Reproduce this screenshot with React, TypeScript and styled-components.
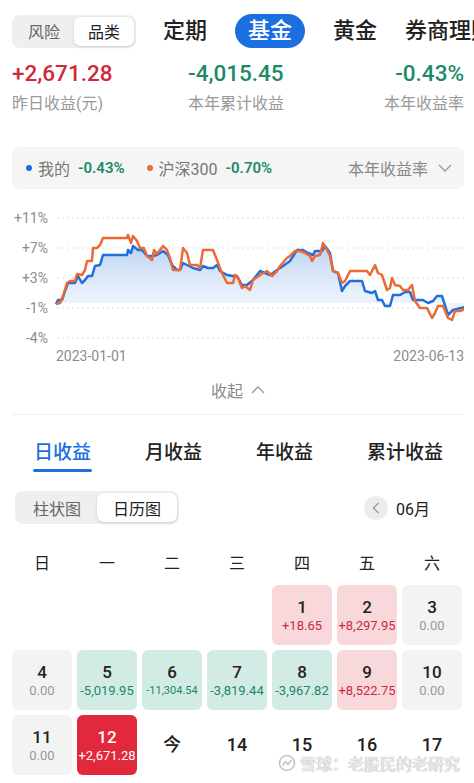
import React from 'react'
import styled, { createGlobalStyle } from 'styled-components'

const GlobalStyle = createGlobalStyle`
  html, body {
    margin: 0;
    padding: 0;
    background: #fff;
    overflow-x: hidden;
  }
  body {
    font-family: Roboto, "Noto Sans CJK SC", sans-serif;
    color: #222;
  }
`

const RED = '#d3283b'
const GREEN = '#1b8a67'
const BLUE = '#1c6fe0'
const ORANGE = '#ec6a34'

const Page = styled.div`
  position: relative;
  width: 474px;
  height: 783px;
  padding: 0 10px 0 12px;
  box-sizing: border-box;
  overflow: hidden;
`

const TopBar = styled.div`
  display: flex;
  align-items: center;
  margin-top: 14px;
  height: 34px;
  white-space: nowrap;
`

const Segment = styled.div<{ $offset?: number }>`
  display: flex;
  align-items: stretch;
  height: 33px;
  padding: 2px;
  box-sizing: border-box;
  background: #efefef;
  border-radius: 8px;
  margin-left: ${p => p.$offset || 0}px;
  flex-shrink: 0;
`

const SegItem = styled.div<{ $active?: boolean; $pad: number }>`
  display: flex;
  align-items: center;
  padding: 0 ${p => p.$pad}px;
  font-size: 16px;
  color: ${p => (p.$active ? '#222' : '#666')};
  background: ${p => (p.$active ? '#fff' : 'transparent')};
  border-radius: 7px;
  box-shadow: ${p => (p.$active ? '0 1px 3px rgba(0,0,0,0.15)' : 'none')};
`

const CatTabs = styled.div`
  display: flex;
  align-items: center;
  gap: 28px;
  margin-left: 27px;
`

const CatTab = styled.div<{ $active?: boolean }>`
  font-size: 22px;
  font-weight: 500;
  line-height: 34px;
  height: 34px;
  color: ${p => (p.$active ? '#fff' : '#222')};
  background: ${p => (p.$active ? BLUE : 'transparent')};
  border-radius: 17px;
  padding: ${p => (p.$active ? '0 13px' : '0')};
  flex-shrink: 0;
`

const Stats = styled.div`
  display: grid;
  grid-template-columns: 176px 1fr auto;
  margin-top: 12px;
`

const Stat = styled.div<{ $right?: boolean }>`
  display: flex;
  flex-direction: column;
  align-items: ${p => (p.$right ? 'flex-end' : 'flex-start')};
`

const StatValue = styled.div<{ $color: string }>`
  font-size: 22.5px;
  font-weight: 500;
  line-height: 26px;
  color: ${p => p.$color};
`

const StatLabel = styled.div`
  font-size: 16px;
  line-height: 22px;
  color: #999;
  margin-top: 7px;
`

const Legend = styled.div`
  display: flex;
  align-items: center;
  height: 42px;
  margin-top: 32px;
  padding: 0 12px 0 12px;
  background: #f5f5f5;
  border-radius: 7px;
  font-size: 16px;
  color: #777;
`

const Dot = styled.span<{ $color: string }>`
  width: 6px;
  height: 6px;
  border-radius: 50%;
  background: ${p => p.$color};
  margin: 0 6px 0 2px;
`

const LegendPct = styled.span`
  color: ${GREEN};
  font-weight: 600;
  font-size: 15px;
  margin: 0 20px 0 8px;
`

const LegendPick = styled.div`
  margin-left: auto;
  display: flex;
  align-items: center;
  gap: 10px;
  color: #888;
`

const ChartSvg = styled.svg`
  display: block;
  margin-top: 14px;
`

const Collapse = styled.div`
  display: flex;
  justify-content: center;
  align-items: center;
  gap: 8px;
  height: 44px;
  padding-bottom: 2px;
  font-size: 16px;
  color: #888;
  border-bottom: 1px solid #efefef;
`

const IncomeTabs = styled.div`
  display: flex;
  justify-content: space-between;
  padding: 27px 21px 0 22px;
`

const IncomeTab = styled.div<{ $active?: boolean }>`
  display: flex;
  flex-direction: column;
  align-items: center;
  font-size: 19px;
  font-weight: 500;
  line-height: 22px;
  color: ${p => (p.$active ? BLUE : '#222')};

  &::after {
    content: '';
    display: block;
    width: calc(100% + 2px);
    height: 3px;
    border-radius: 2px;
    margin-top: 5px;
    background: ${p => (p.$active ? BLUE : 'transparent')};
  }
`

const ViewRow = styled.div`
  display: flex;
  align-items: center;
  justify-content: space-between;
  margin-top: 19px;
  padding-right: 34px;
`

const MonthPick = styled.div`
  display: flex;
  align-items: center;
  gap: 8px;
  font-size: 16px;
  color: #222;
`

const RoundBtn = styled.div`
  width: 24px;
  height: 24px;
  border-radius: 50%;
  background: #ececec;
  display: flex;
  align-items: center;
  justify-content: center;
`

const Weekdays = styled.div`
  display: grid;
  grid-template-columns: repeat(7, 60px);
  column-gap: 5px;
  margin-top: 30px;
  font-size: 16px;
  line-height: 20px;
  color: #222;
  text-align: center;
`

const Days = styled.div`
  display: grid;
  grid-template-columns: repeat(7, 60px);
  grid-auto-rows: 60px;
  gap: 5px;
  margin-top: 11px;
`

type Tone = 'up' | 'down' | 'flat' | 'hot' | 'none'

const cellBg: Record<Tone, string> = {
  up: '#f9d8db',
  down: '#d2ece5',
  flat: '#f3f3f3',
  hot: '#e1283c',
  none: 'transparent',
}

const valColor: Record<Tone, string> = {
  up: '#c92a40',
  down: '#1d8668',
  flat: '#999',
  hot: '#fff',
  none: '#999',
}

const Cell = styled.div<{ $tone: Tone }>`
  display: flex;
  flex-direction: column;
  align-items: center;
  justify-content: center;
  border-radius: 6px;
  background: ${p => cellBg[p.$tone]};
  color: ${p => (p.$tone === 'hot' ? '#fff' : '#222')};
`

const DayNum = styled.div<{ $big?: boolean }>`
  font-size: ${p => (p.$big ? 18 : 17)}px;
  font-weight: 500;
  line-height: 20px;
`

const DayVal = styled.div<{ $tone: Tone; $small?: boolean }>`
  font-size: ${p => (p.$small ? 11 : 13)}px;
  line-height: 16px;
  margin-top: 1px;
  color: ${p => valColor[p.$tone]};
`

const Watermark = styled.div`
  position: absolute;
  right: 14px;
  bottom: 8px;
  display: flex;
  align-items: center;
  gap: 4px;
  font-size: 16px;
  color: #ececec;
  text-shadow: 0 0 1px #b0b0b0, 0 0 1px #b0b0b0;
`

const orange =
  '56,301 60,300 63,293 67,280 70,278 75,278 77,271 82,272 85,267 87,258 92,258 93,245 97,245 100,242 103,235 127,235 128,232 131,240 133,233 137,238 140,245 144,245 147,253 152,257 154,247 157,251 163,243 167,247 170,255 173,267 180,267 183,245 187,250 190,262 197,262 200,265 203,247 208,247 213,247 217,257 220,265 222,270 227,280 233,280 235,272 238,275 242,285 245,283 250,287 253,277 260,272 267,268 272,273 277,268 280,263 287,255 290,253 295,248 300,248 305,250 310,253 312,258 315,253 320,252 323,240 327,247 330,253 333,268 338,270 342,280 345,278 350,268 367,268 370,272 375,262 378,270 382,272 387,287 390,285 392,275 395,282 400,283 403,287 408,287 412,282 415,298 420,305 427,305 432,315 435,310 438,303 443,303 448,315 452,317 455,308 460,308 465,306'

const blue =
  '56,301 58,297 62,297 65,288 68,280 75,280 78,273 82,280 85,277 88,273 92,273 95,263 100,262 103,252 127,252 128,247 131,250 133,243 138,247 142,247 147,253 153,253 157,252 163,248 168,252 172,262 177,267 180,267 183,260 187,262 193,265 200,267 203,263 208,265 213,265 217,262 220,268 227,272 233,273 237,273 242,282 247,282 253,277 260,268 270,272 277,267 283,263 290,258 297,247 303,247 308,250 313,252 315,248 322,248 325,243 330,250 333,268 338,270 342,288 345,283 350,278 362,278 365,288 372,290 375,288 378,297 382,297 385,303 390,303 393,292 400,292 405,289 410,289 413,297 418,297 423,297 428,300 433,298 437,293 442,293 448,312 453,307 465,304'

const yTicks = [
  { label: '+11%', y: 215 },
  { label: '+7%', y: 245 },
  { label: '+3%', y: 275 },
  { label: '-1%', y: 305 },
  { label: '-4%', y: 335 },
]

function Chart() {
  return (
    <ChartSvg width={452} height={165} viewBox="12 200 452 165">
      <defs>
        <linearGradient id="area" x1="0" y1="0" x2="0" y2="1">
          <stop offset="0" stopColor="#bcd3f3" />
          <stop offset="1" stopColor="#eef4fd" stopOpacity="0.6" />
        </linearGradient>
      </defs>
      {yTicks.map(t => (
        <g key={t.label}>
          <line x1={57} x2={464} y1={t.y} y2={t.y} stroke="#dcdcdc" strokeDasharray="2 3" />
          <text x={48} y={t.y + 5} textAnchor="end" fontSize={14} fill="#8c8c8c">
            {t.label}
          </text>
        </g>
      ))}
      <polygon points={`${blue} 465,300 56,300`} fill="url(#area)" />
      <polyline points={blue} fill="none" stroke="#1f6fe0" strokeWidth={2.5} strokeLinejoin="round" />
      <polyline points={orange} fill="none" stroke={ORANGE} strokeWidth={2.5} strokeLinejoin="round" />
      <text x={56} y={358} fontSize={14} fill="#8c8c8c">2023-01-01</text>
      <text x={464} y={358} fontSize={14} fill="#8c8c8c" textAnchor="end">2023-06-13</text>
    </ChartSvg>
  )
}

type Day = { n: string; v?: string; tone: Tone; small?: boolean }

const days: (Day | null)[] = [
  null, null, null, null,
  { n: '1', v: '+18.65', tone: 'up' },
  { n: '2', v: '+8,297.95', tone: 'up' },
  { n: '3', v: '0.00', tone: 'flat' },
  { n: '4', v: '0.00', tone: 'flat' },
  { n: '5', v: '-5,019.95', tone: 'down' },
  { n: '6', v: '-11,304.54', tone: 'down', small: true },
  { n: '7', v: '-3,819.44', tone: 'down' },
  { n: '8', v: '-3,967.82', tone: 'down' },
  { n: '9', v: '+8,522.75', tone: 'up' },
  { n: '10', v: '0.00', tone: 'flat' },
  { n: '11', v: '0.00', tone: 'flat' },
  { n: '12', v: '+2,671.28', tone: 'hot' },
  { n: '今', tone: 'none' },
  { n: '14', tone: 'none' },
  { n: '15', tone: 'none' },
  { n: '16', tone: 'none' },
  { n: '17', tone: 'none' },
]

export default function App() {
  return (
    <Page>
      <GlobalStyle />
      <TopBar>
        <Segment>
          <SegItem $pad={14}>风险</SegItem>
          <SegItem $pad={14} $active>品类</SegItem>
        </Segment>
        <CatTabs>
          <CatTab>定期</CatTab>
          <CatTab $active>基金</CatTab>
          <CatTab>黄金</CatTab>
          <CatTab>券商理财</CatTab>
        </CatTabs>
      </TopBar>

      <Stats>
        <Stat>
          <StatValue $color={RED}>+2,671.28</StatValue>
          <StatLabel>昨日收益(元)</StatLabel>
        </Stat>
        <Stat>
          <StatValue $color={GREEN}>-4,015.45</StatValue>
          <StatLabel>本年累计收益</StatLabel>
        </Stat>
        <Stat $right>
          <StatValue $color={GREEN}>-0.43%</StatValue>
          <StatLabel>本年收益率</StatLabel>
        </Stat>
      </Stats>

      <Legend>
        <Dot $color={BLUE} />
        我的
        <LegendPct>-0.43%</LegendPct>
        <Dot $color={ORANGE} />
        沪深300
        <LegendPct>-0.70%</LegendPct>
        <LegendPick>
          本年收益率
          <svg width="14" height="8" viewBox="0 0 14 8">
            <path d="M1 1l6 6 6-6" fill="none" stroke="#999" strokeWidth="1.3" />
          </svg>
        </LegendPick>
      </Legend>

      <Chart />

      <Collapse>
        收起
        <svg width="14" height="8" viewBox="0 0 14 8">
          <path d="M1 7l6-6 6 6" fill="none" stroke="#999" strokeWidth="1.3" />
        </svg>
      </Collapse>

      <IncomeTabs>
        <IncomeTab $active>日收益</IncomeTab>
        <IncomeTab>月收益</IncomeTab>
        <IncomeTab>年收益</IncomeTab>
        <IncomeTab>累计收益</IncomeTab>
      </IncomeTabs>

      <ViewRow>
        <Segment $offset={3}>
          <SegItem $pad={16}>柱状图</SegItem>
          <SegItem $pad={16} $active>日历图</SegItem>
        </Segment>
        <MonthPick>
          <RoundBtn>
            <svg width="8" height="12" viewBox="0 0 8 12">
              <path d="M6.5 1L1.5 6l5 5" fill="none" stroke="#999" strokeWidth="1.3" />
            </svg>
          </RoundBtn>
          06月
        </MonthPick>
      </ViewRow>

      <Weekdays>
        {['日', '一', '二', '三', '四', '五', '六'].map(d => (
          <div key={d}>{d}</div>
        ))}
      </Weekdays>

      <Days>
        {days.map((d, i) =>
          d ? (
            <Cell key={i} $tone={d.tone}>
              <DayNum $big={!d.v}>{d.n}</DayNum>
              {d.v && (
                <DayVal $tone={d.tone} $small={d.small}>
                  {d.v}
                </DayVal>
              )}
            </Cell>
          ) : (
            <Cell key={i} $tone="none" />
          )
        )}
      </Days>

      <Watermark>
        <svg width="18" height="18" viewBox="0 0 18 18">
          <circle cx="9" cy="9" r="7.5" fill="none" stroke="#c4c4c4" strokeWidth="1.6" />
          <path d="M4.5 11.5l3-4 2.5 3 3.5-4.5" fill="none" stroke="#c4c4c4" strokeWidth="1.6" />
        </svg>
        雪球：老股民的老研究
      </Watermark>
    </Page>
  )
}
